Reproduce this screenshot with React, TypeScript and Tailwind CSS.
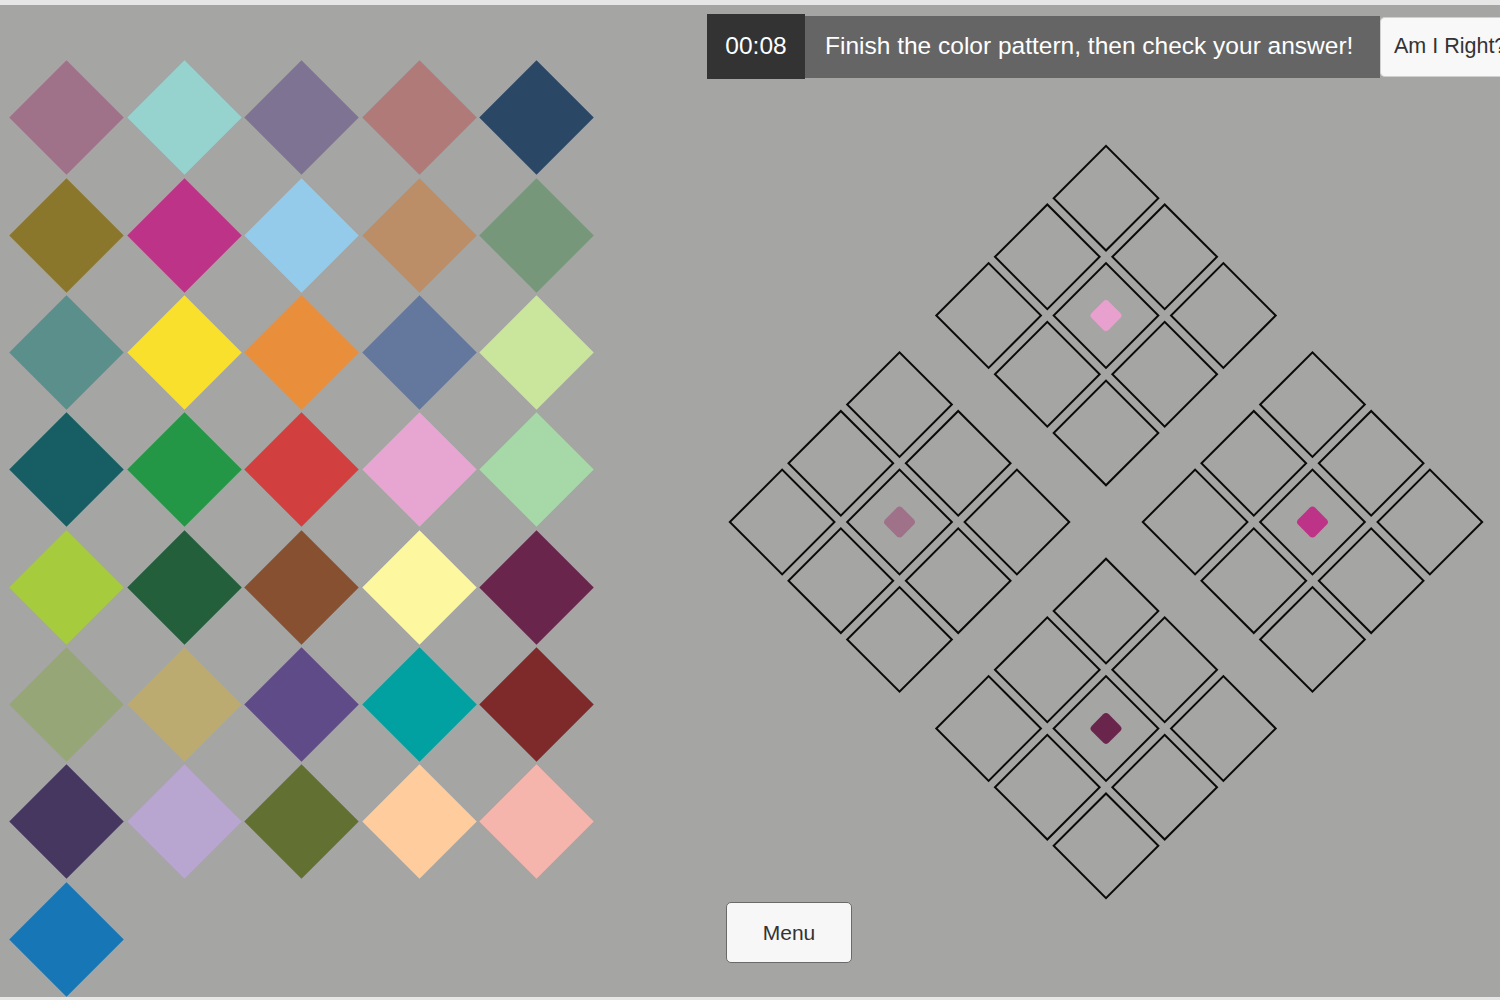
import React from 'react'

// palette swatches, row by row (5 per row)
const swatches = [
  '#a0728a', '#96d3cf', '#7f7393', '#b07a78', '#2a4766',
  '#8b772c', '#bd3387', '#94cbeb', '#bb8e68', '#76977a',
  '#5a8f8c', '#f9e02c', '#e98e3a', '#64779c', '#c9e69c',
  '#165e64', '#239745', '#d23f3f', '#e7a6d1', '#a6d8a8',
  '#a6cc3e', '#235f3b', '#875030', '#fdf79f', '#69254c',
  '#96a676', '#bcab70', '#5e4b87', '#00a1a0', '#7f2a2a',
  '#463761', '#b8a6d0', '#627031', '#fecc9d', '#f5b5ac',
  '#1676b6',
]

// board quadrants in unrotated order: top, right, left, bottom
const quadrants = ['#e8a0cf', '#bd3387', '#a0728a', '#69254c']

function Quadrant({ marker }: { marker: string }) {
  return (
    <div className="grid grid-cols-[repeat(3,76px)] grid-rows-[repeat(3,76px)] gap-[7px]">
      {Array.from({ length: 9 }).map((_, i) => (
        <div key={i} className="flex items-center justify-center border-[2.5px] border-[#0a0a0a]">
          {i === 4 && (
            <div className="h-[24px] w-[24px] rounded-[4px]" style={{ backgroundColor: marker }} />
          )}
        </div>
      ))}
    </div>
  )
}

export default function App() {
  return (
    <div
      className="flex h-screen w-full flex-col overflow-hidden bg-[#a5a5a3]"
      style={{ fontFamily: '"Liberation Sans", Arial, sans-serif' }}
    >
      <div className="h-[5px] shrink-0 bg-[#e6e6e6]" />

      <div className="flex min-h-0 flex-1">
        {/* Palette */}
        <div className="w-[707px] shrink-0 pl-[7.75px] pt-[54.35px]">
          <div className="grid grid-cols-[repeat(5,117.5px)] auto-rows-[117.3px]">
            {swatches.map((c) => (
              <div key={c} className="flex items-center justify-center">
                <div className="h-[81px] w-[81px] rotate-45" style={{ backgroundColor: c }} />
              </div>
            ))}
          </div>
        </div>

        {/* Game area */}
        <div className="flex flex-1 flex-col">
          <div className="mt-[9px] flex items-center">
            <div className="flex h-[65px] w-[98px] items-center justify-center bg-[#333333] text-[24.5px] text-white">
              00:08
            </div>
            <div className="flex h-[62px] w-[575px] items-center bg-[#656565] pl-[20px] text-[24.5px] text-white">
              Finish the color pattern, then check your answer!
            </div>
            <button className="flex h-[60px] min-w-0 flex-1 items-center overflow-hidden whitespace-nowrap rounded-l-[5px] border border-r-0 border-[#d0d0d0] bg-[#f8f8f8] pl-[13px] text-[21.5px] text-[#333333]">
              Am I Right?
            </button>
          </div>

          <div className="ml-[132px] mt-[176px] h-[534px] w-[534px] rotate-45">
            <div className="grid grid-cols-2 gap-[50px]">
              {quadrants.map((m) => (
                <Quadrant key={m} marker={m} />
              ))}
            </div>
          </div>

          <button className="ml-[19px] mt-[113px] flex h-[61px] w-[126px] items-center justify-center rounded-[5px] border border-[#6a6a6a] bg-[#f7f7f7] text-[21px] text-[#333333]">
            Menu
          </button>
        </div>
      </div>

      <div className="h-[3px] shrink-0 bg-[#e6e6e6]" />
    </div>
  )
}
